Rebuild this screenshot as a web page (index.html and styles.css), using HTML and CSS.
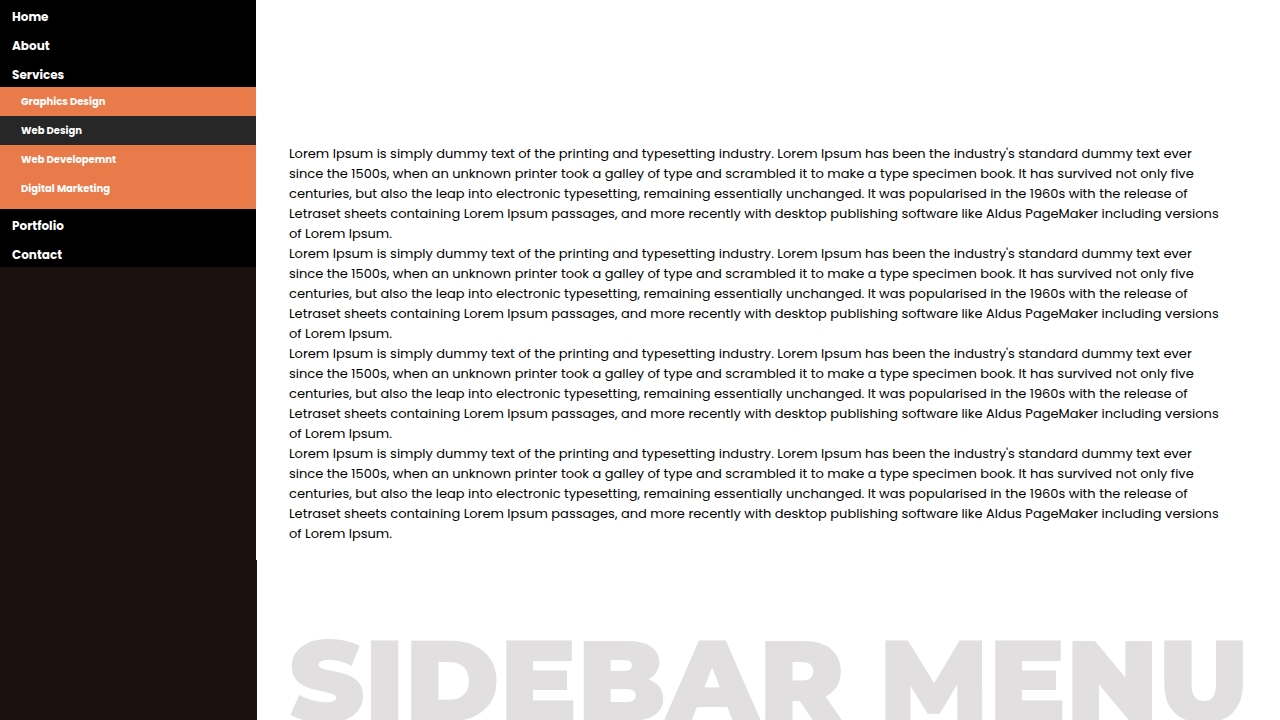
FILE: index.html
```html
<!DOCTYPE html>
<html lang="en">
<head>
<meta charset="utf-8">
<meta name="viewport" content="width=device-width, initial-scale=1">
<title>Sidebar Menu</title>
<link rel="stylesheet" href="styles.css">
</head>
<body>
<div class="page">
  <nav class="sidebar" aria-label="Main">
    <ul class="menu">
      <li><a class="menu-link" href="#">Home</a></li>
      <li><a class="menu-link" href="#">About</a></li>
      <li>
        <a class="menu-link" href="#">Services</a>
        <ul class="submenu">
          <li><a class="submenu-link" href="#">Graphics Design</a></li>
          <li><a class="submenu-link active" href="#">Web Design</a></li>
          <li><a class="submenu-link" href="#">Web Developemnt</a></li>
          <li><a class="submenu-link" href="#">Digital Marketing</a></li>
        </ul>
      </li>
      <li><a class="menu-link" href="#">Portfolio</a></li>
      <li><a class="menu-link" href="#">Contact</a></li>
    </ul>
  </nav>
  <main class="main">
    <div class="content">
      <p>Lorem Ipsum is simply dummy text of the printing and typesetting industry. Lorem Ipsum has been the industry's standard dummy text ever<br>since the 1500s, when an unknown printer took a galley of type and scrambled it to make a type specimen book. It has survived not only five<br>centuries, but also the leap into electronic typesetting, remaining essentially unchanged. It was popularised in the 1960s with the release of<br>Letraset sheets containing Lorem Ipsum passages, and more recently with desktop publishing software like Aldus PageMaker including versions<br>of Lorem Ipsum.</p>
      <p>Lorem Ipsum is simply dummy text of the printing and typesetting industry. Lorem Ipsum has been the industry's standard dummy text ever<br>since the 1500s, when an unknown printer took a galley of type and scrambled it to make a type specimen book. It has survived not only five<br>centuries, but also the leap into electronic typesetting, remaining essentially unchanged. It was popularised in the 1960s with the release of<br>Letraset sheets containing Lorem Ipsum passages, and more recently with desktop publishing software like Aldus PageMaker including versions<br>of Lorem Ipsum.</p>
      <p>Lorem Ipsum is simply dummy text of the printing and typesetting industry. Lorem Ipsum has been the industry's standard dummy text ever<br>since the 1500s, when an unknown printer took a galley of type and scrambled it to make a type specimen book. It has survived not only five<br>centuries, but also the leap into electronic typesetting, remaining essentially unchanged. It was popularised in the 1960s with the release of<br>Letraset sheets containing Lorem Ipsum passages, and more recently with desktop publishing software like Aldus PageMaker including versions<br>of Lorem Ipsum.</p>
      <p>Lorem Ipsum is simply dummy text of the printing and typesetting industry. Lorem Ipsum has been the industry's standard dummy text ever<br>since the 1500s, when an unknown printer took a galley of type and scrambled it to make a type specimen book. It has survived not only five<br>centuries, but also the leap into electronic typesetting, remaining essentially unchanged. It was popularised in the 1960s with the release of<br>Letraset sheets containing Lorem Ipsum passages, and more recently with desktop publishing software like Aldus PageMaker including versions<br>of Lorem Ipsum.</p>
    </div>
    <div class="banner">
      <h1 class="title">SIDEBAR MENU</h1>
    </div>
  </main>
</div>
</body>
</html>
```
FILE: styles.css
```css
* {
  box-sizing: border-box;
}

body {
  margin: 0;
  background: #fff;
  color: #000;
  font-family: Poppins, Inter, "Open Sans", sans-serif;
}

.page {
  display: grid;
  grid-template-columns: 20% 1fr;
  min-height: 100vh;
}

.sidebar {
  background: #1b110f;
}

.menu,
.submenu {
  margin: 0;
  padding: 0;
  list-style: none;
}

.menu {
  background: #000;
}

.menu-link,
.submenu-link {
  display: block;
  color: #fff;
  font-weight: 700;
  text-decoration: none;
}

.menu-link {
  padding: 5px 12px 0;
  font-size: 12px;
  line-height: 24px;
}

.submenu {
  padding-bottom: 6px;
  background: #e97b4b;
}

.submenu-link {
  padding: 0 21px;
  font-size: 10px;
  line-height: 29px;
}

.submenu-link.active,
.submenu-link:hover {
  background: #272727;
}

.main {
  display: flex;
  flex-direction: column;
  min-width: 0;
}

.content {
  padding: 144px 32px 16px 33px;
  font-size: 13px;
  line-height: 20px;
}

.content p {
  margin: 0;
}

.banner {
  flex: 1;
  display: flex;
  align-items: flex-end;
  overflow: hidden;
  padding-left: 32px;
  border-left: 1px solid #1b110f;
}

.title {
  margin: 0;
  color: #e1dfe0;
  font-family: Montserrat, Inter, sans-serif;
  font-size: 115px;
  font-weight: 900;
  line-height: 80px;
  white-space: nowrap;
}
```
